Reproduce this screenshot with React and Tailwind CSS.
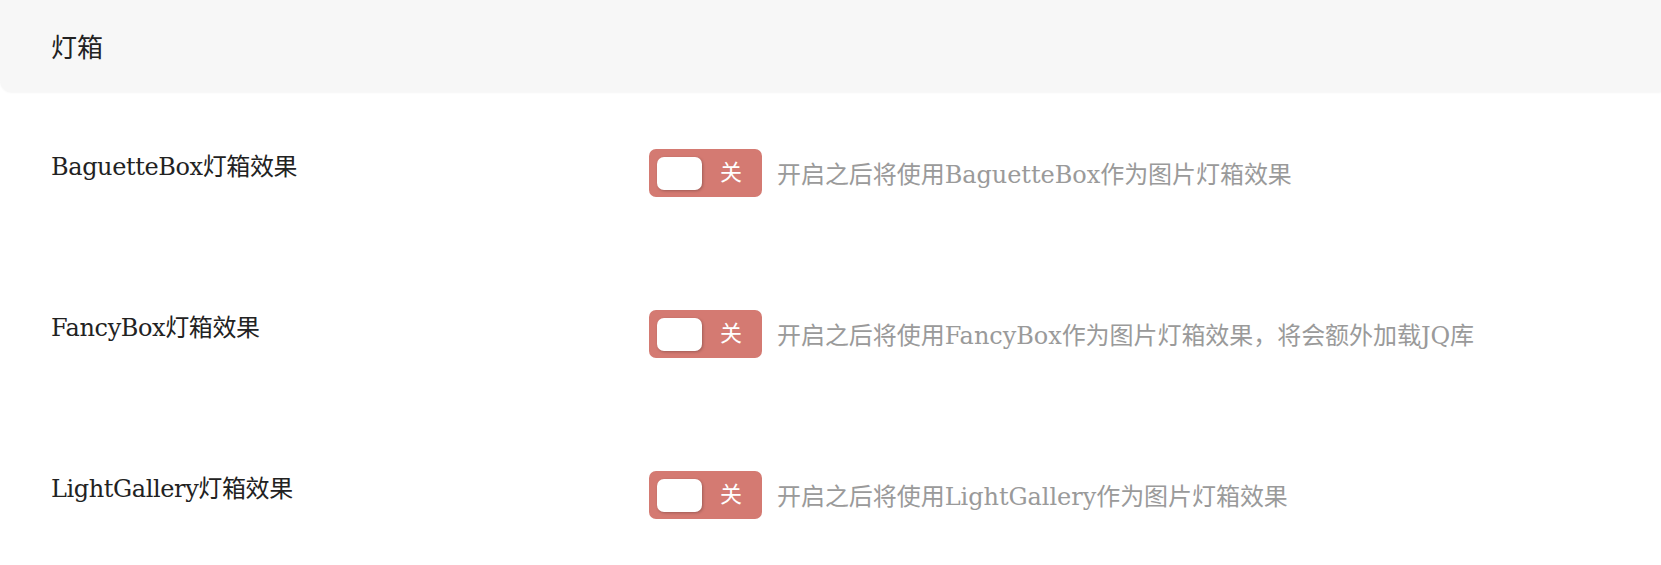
import React from "react";

const FONT = { fontFamily: '"DejaVu Serif", "Noto Sans CJK SC", serif' };

const options = [
  {
    label: "BaguetteBox灯箱效果",
    hint: "开启之后将使用BaguetteBox作为图片灯箱效果",
  },
  {
    label: "FancyBox灯箱效果",
    hint: "开启之后将使用FancyBox作为图片灯箱效果，将会额外加载JQ库",
  },
  {
    label: "LightGallery灯箱效果",
    hint: "开启之后将使用LightGallery作为图片灯箱效果",
  },
];

function Toggle() {
  return (
    <button
      type="button"
      className="flex h-[48px] w-[113px] shrink-0 items-center rounded-[7px] bg-[#d47a72] p-[8px]"
    >
      <span className="h-[33px] w-[45px] rounded-[7px] bg-white shadow-[1px_1px_3px_rgba(0,0,0,0.25)]" />
      <span className="flex-1 pl-[6px] text-center text-[22px] leading-none text-white">关</span>
    </button>
  );
}

function OptionRow({ label, hint }) {
  return (
    <div className="flex items-start">
      <div className="w-[598px] shrink-0 text-[24px] leading-[36px] tracking-[-0.4px] text-[#222222]">
        {label}
      </div>
      <div className="flex items-center gap-[15px]">
        <Toggle />
        <span className="pt-[4px] text-[24px] leading-[36px] tracking-[-0.05px] text-[#9a9a9a]">
          {hint}
        </span>
      </div>
    </div>
  );
}

export default function App() {
  return (
    <div className="min-h-[565px] w-full bg-white" style={FONT}>
      <div className="flex h-[92px] items-center rounded-bl-[12px] bg-[#f7f7f7] pl-[51px] shadow-[0_1px_2px_rgba(0,0,0,0.04)]">
        <h2 className="pt-[3px] text-[26px] font-normal leading-none text-[#222222]">灯箱</h2>
      </div>
      <div className="flex flex-col gap-[113px] pl-[51px] pt-[57px]">
        {options.map((o) => (
          <OptionRow key={o.label} label={o.label} hint={o.hint} />
        ))}
      </div>
    </div>
  );
}
